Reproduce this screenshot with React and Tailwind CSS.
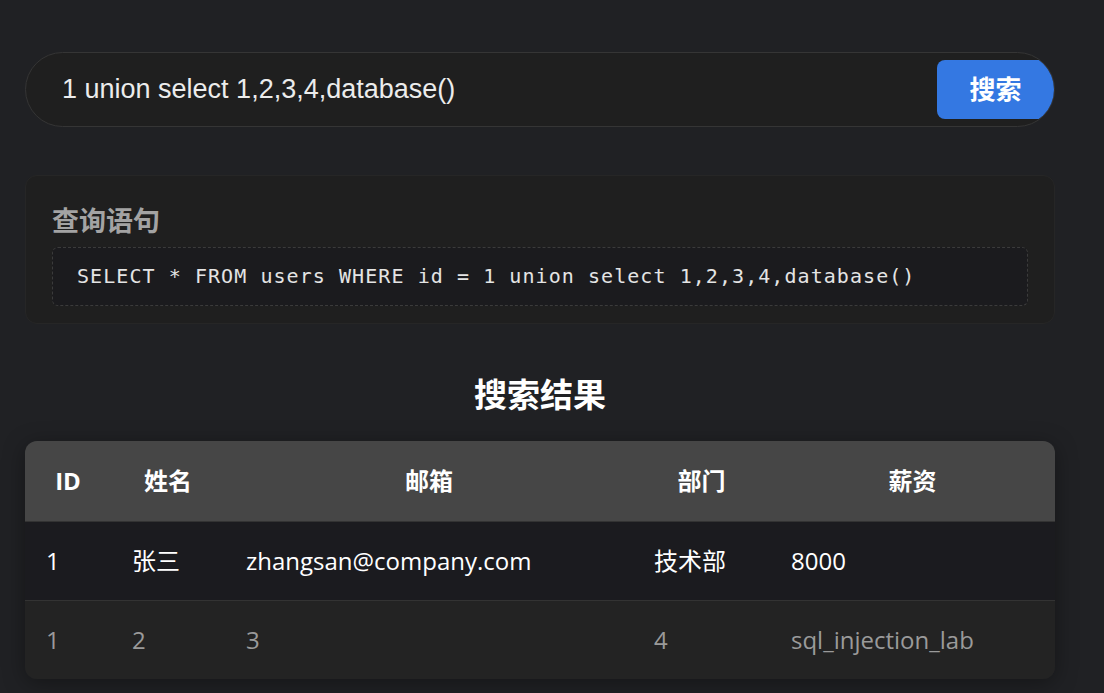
import React, { useState } from 'react';

const rows = [
  { id: '1', name: '张三', email: 'zhangsan@company.com', dept: '技术部', salary: '8000', muted: false },
  { id: '1', name: '2', email: '3', dept: '4', salary: 'sql_injection_lab', muted: true },
];

const cjk = { fontFamily: '"Open Sans", "Noto Sans CJK SC", sans-serif' };

export default function App() {
  const [query, setQuery] = useState('1 union select 1,2,3,4,database()');

  return (
    <div className="min-h-[693px] bg-[#202124] pl-[25px] pt-[52px] pb-[20px]" style={cjk}>
      <div className="w-[1030px]">
        {/* search bar */}
        <div className="flex items-center h-[75px] rounded-full overflow-hidden border border-[#353535] bg-[#1f1f1f]">
          <input
            value={query}
            onChange={(e) => setQuery(e.target.value)}
            className="flex-1 bg-transparent outline-none pl-[36px] text-[27px] text-[#ececec]"
            style={{ fontFamily: '"Liberation Sans", "Noto Sans CJK SC", sans-serif' }}
          />
          <button className="h-[59px] w-[117px] rounded-lg bg-[#3478e2] text-white text-[26px] font-bold">
            搜索
          </button>
        </div>

        {/* query card */}
        <div className="mt-[48px] rounded-xl border border-[#262626] bg-[#1f1f1f] px-[26px] pt-[26px] pb-[17px]">
          <h3 className="text-[27px] leading-[37px] font-bold text-[#a3a3a3] mb-[8px]">查询语句</h3>
          <div className="rounded-md border border-dashed border-[#3b3b3b] bg-[#1b1b1e] pl-[24px] py-[13px]">
            <code
              className="text-[20px] leading-[31px] tracking-[1.06px] text-[#e4e4e4]"
              style={{ fontFamily: '"DejaVu Sans Mono", monospace' }}
            >
              SELECT * FROM users WHERE id = {query}
            </code>
          </div>
        </div>

        <h2 className="mt-[50px] mb-[25px] text-center text-[33px] leading-[42px] font-bold text-white">搜索结果</h2>

        {/* results table */}
        <div className="rounded-xl overflow-hidden shadow-[0_4px_22px_rgba(0,0,0,0.35)]">
          <table className="w-full border-collapse">
            <thead>
              <tr className="bg-[#464646] border-b border-[#333]">
                <th className="w-[86px] h-[80px] text-center text-[24px] font-bold text-white">ID</th>
                <th className="w-[114px] h-[80px] text-center text-[24px] font-bold text-white">姓名</th>
                <th className="w-[408px] h-[80px] text-center text-[24px] font-bold text-white">邮箱</th>
                <th className="w-[137px] h-[80px] text-center text-[24px] font-bold text-white">部门</th>
                <th className="h-[80px] text-center text-[24px] font-bold text-white">薪资</th>
              </tr>
            </thead>
            <tbody>
              {rows.map((r, i) => (
                <tr
                  key={i}
                  className={r.muted ? 'bg-[#232323] text-[#9a9a9a]' : 'bg-[#1b1b1f] text-white border-b border-[#333]'}
                >
                  <td className="h-[79px] pl-[21px] text-[24px]">{r.id}</td>
                  <td className="h-[79px] pl-[21px] text-[24px]">{r.name}</td>
                  <td className="h-[79px] pl-[21px] text-[24px]">{r.email}</td>
                  <td className="h-[79px] pl-[21px] text-[24px]">{r.dept}</td>
                  <td className="h-[79px] pl-[21px] text-[24px]">{r.salary}</td>
                </tr>
              ))}
            </tbody>
          </table>
        </div>
      </div>
    </div>
  );
}
